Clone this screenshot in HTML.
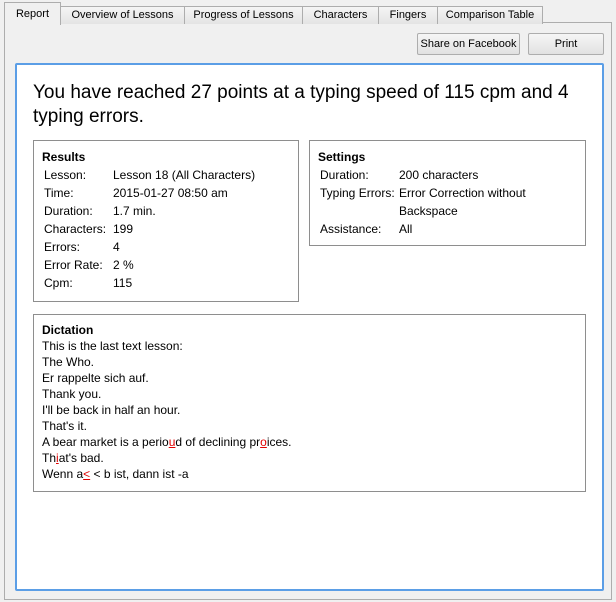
<!DOCTYPE html>
<html><head><style>
body{margin:0;width:616px;height:602px;background:#f0f0f0;font-family:"Liberation Sans",sans-serif;font-size:12px;color:#000;position:relative;overflow:hidden}
.a{position:absolute}
.tab{position:absolute;top:6px;height:17px;border:1px solid #adadad;border-bottom:none;background:linear-gradient(#f5f5f5,#e4e4e4);font-size:11px;text-align:center;line-height:17px}
.btn{position:absolute;top:33px;height:20px;border:1px solid #adadad;border-radius:2px;background:linear-gradient(#f6f6f6,#e1e1e1);font-size:11px;text-align:center;line-height:20px}
.box{position:absolute;border:1px solid #8e8e8e;background:#fff}
.t{position:absolute;white-space:nowrap;line-height:18px}
b{font-weight:bold}
.r{color:#e00000;text-decoration:underline}
</style></head><body>
<div class="a" style="left:4px;top:22px;width:606px;height:576px;border:1px solid #adadad;background:#f0f0f0"></div>
<div class="tab" style="left:60px;width:123px">Overview of Lessons</div>
<div class="tab" style="left:184px;width:117px">Progress of Lessons</div>
<div class="tab" style="left:302px;width:75px">Characters</div>
<div class="tab" style="left:378px;width:58px">Fingers</div>
<div class="tab" style="left:437px;width:104px">Comparison Table</div>
<div class="tab" style="left:4px;top:2px;height:22px;width:55px;background:#f0f0f0;line-height:22px">Report</div>
<div class="btn" style="left:417px;width:101px">Share on Facebook</div>
<div class="btn" style="left:528px;width:74px">Print</div>
<div class="a" style="left:15px;top:63px;width:585px;height:524px;border:2px solid #5b9ee6;border-radius:2px;background:#fff"></div>
<div class="t" style="left:33px;top:81px;font-size:19px;line-height:24px;white-space:normal;width:560px">You have reached 27 points at a typing speed of 115 cpm and 4 typing errors.</div>
<div class="box" style="left:33px;top:140px;width:264px;height:160px"></div>
<div class="t" style="left:42px;top:148px"><b>Results</b></div>
<div class="t" style="left:44px;top:166px">Lesson:<br>Time:<br>Duration:<br>Characters:<br>Errors:<br>Error Rate:<br>Cpm:</div>
<div class="t" style="left:113px;top:166px">Lesson 18 (All Characters)<br>2015-01-27 08:50 am<br>1.7 min.<br>199<br>4<br>2 %<br>115</div>
<div class="box" style="left:309px;top:140px;width:275px;height:104px"></div>
<div class="t" style="left:318px;top:148px"><b>Settings</b></div>
<div class="t" style="left:320px;top:166px">Duration:<br>Typing Errors:<br><br>Assistance:</div>
<div class="t" style="left:399px;top:166px">200 characters<br>Error Correction without<br>Backspace<br>All</div>
<div class="box" style="left:33px;top:314px;width:551px;height:176px"></div>
<div class="t" style="left:42px;top:322px;line-height:16px"><b>Dictation</b><br>This is the last text lesson:<br>The Who.<br>Er rappelte sich auf.<br>Thank you.<br>I'll be back in half an hour.<br>That's it.<br>A bear market is a perio<span class="r">u</span>d of declining pr<span class="r">o</span>ices.<br>Th<span class="r">i</span>at's bad.<br>Wenn a<span class="r">&lt;</span> &lt; b ist, dann ist -a</div>
</body></html>
